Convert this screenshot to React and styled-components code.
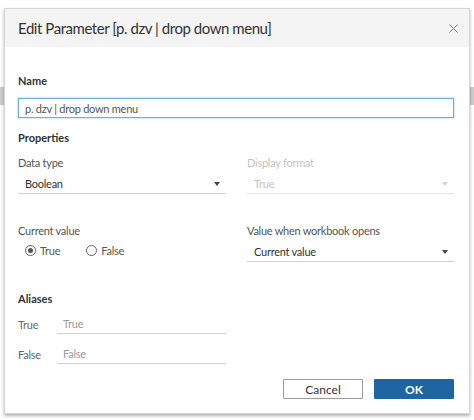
import React from 'react';
import styled, { createGlobalStyle } from 'styled-components';

const GlobalStyle = createGlobalStyle`
  html, body {
    margin: 0;
    background: #fff;
    font-family: Lato, "Open Sans", "Liberation Sans", sans-serif;
  }
`;

const Page = styled.div`
  position: relative;
  width: 474px;
  height: 420px;
  overflow: hidden;
`;

const Backdrop = styled.div`
  margin-top: 87px;
  height: 18px;
  background: #cbcbcb;
`;

const Dialog = styled.div`
  position: absolute;
  left: 4px;
  top: 8px;
  width: 466px;
  height: 406px;
  box-sizing: border-box;
  background: #fff;
  border: 1px solid #d6d6d6;
  box-shadow: 0 2px 3px rgba(0, 0, 0, 0.3);
  display: flex;
  flex-direction: column;
`;

const Header = styled.div`
  height: 38px;
  flex: none;
  background: #f4f4f4;
  display: flex;
  align-items: center;
  justify-content: space-between;
  padding: 0 11px 0 13px;
`;

const Title = styled.div`
  font-size: 15px;
  letter-spacing: -0.45px;
  color: #333;
`;

const Close = styled.button`
  border: 0;
  background: none;
  padding: 0;
  width: 9px;
  height: 9px;
  display: flex;
  color: #777;
`;

const Body = styled.div`
  flex: 1;
  display: flex;
  flex-direction: column;
  padding: 0 15px 15px 13px;
`;

const SectionTitle = styled.div`
  font-size: 11px;
  line-height: 16px;
  font-weight: 700;
  color: #333;
  margin-top: ${(p) => p.$top}px;
`;

const NameInput = styled.div`
  margin-top: 9px;
  height: 20px;
  box-sizing: border-box;
  border: 1px solid #6bb0de;
  box-shadow: 0 0 2px rgba(80, 160, 220, 0.6);
  display: flex;
  align-items: center;
  padding-left: 6px;
  font-size: 11px;
  letter-spacing: -0.25px;
  color: #555;
`;

const Grid = styled.div`
  display: grid;
  grid-template-columns: 208px 207px;
  column-gap: 21px;
  margin-top: ${(p) => p.$top}px;
`;

const Field = styled.div`
  display: flex;
  flex-direction: column;
`;

const Label = styled.div`
  font-size: 11px;
  letter-spacing: -0.25px;
  line-height: 16px;
  color: ${(p) => (p.$disabled ? '#c4c4c4' : '#555')};
`;

const Select = styled.div`
  margin-top: 3px;
  height: 19px;
  border-bottom: 1px solid ${(p) => (p.$disabled ? '#e3e3e3' : '#d0d0d0')};
  display: flex;
  align-items: center;
  justify-content: space-between;
  padding: 0 6px 0 7px;
  font-size: 11px;
  letter-spacing: -0.25px;
  color: ${(p) => (p.$disabled ? '#c4c4c4' : '#333')};
`;

const Caret = styled.span`
  width: 0;
  height: 0;
  border-left: 3.5px solid transparent;
  border-right: 3.5px solid transparent;
  border-top: 4px solid ${(p) => (p.$disabled ? '#d4d4d4' : '#444')};
`;

const RadioRow = styled.div`
  margin-top: 3px;
  height: 16px;
  display: flex;
  align-items: center;
  gap: 26px;
  padding-left: 7px;
`;

const RadioOption = styled.label`
  display: flex;
  align-items: center;
  gap: 4px;
  font-size: 11px;
  letter-spacing: -0.25px;
  color: #555;
`;

const Circle = styled.span`
  width: 11px;
  height: 11px;
  box-sizing: border-box;
  border-radius: 50%;
  border: 1px solid #666;
  display: flex;
  align-items: center;
  justify-content: center;

  &::after {
    content: '';
    width: 5px;
    height: 5px;
    border-radius: 50%;
    background: ${(p) => (p.$checked ? '#555' : 'transparent')};
  }
`;

const AliasRow = styled.div`
  display: flex;
  align-items: flex-end;
  margin-top: ${(p) => p.$top}px;
`;

const AliasLabel = styled.div`
  width: 39px;
  font-size: 11px;
  letter-spacing: -0.25px;
  line-height: 19px;
  color: #666;
`;

const AliasInput = styled.div`
  width: 163px;
  height: 19px;
  border-bottom: 1px solid #d0d0d0;
  display: flex;
  align-items: center;
  padding-left: 6px;
  font-size: 11px;
  letter-spacing: -0.25px;
  color: #9a9a9a;
`;

const Footer = styled.div`
  margin-top: 15px;
  display: flex;
  justify-content: flex-end;
  gap: 11px;
`;

const Button = styled.button`
  width: 80px;
  height: 20px;
  box-sizing: border-box;
  font-family: inherit;
  font-size: 12px;
  border-radius: 1px;
  border: 1px solid ${(p) => (p.$primary ? '#1f65a3' : '#999')};
  background: ${(p) => (p.$primary ? '#1f65a3' : '#fff')};
  color: ${(p) => (p.$primary ? '#fff' : '#333')};
  font-weight: ${(p) => (p.$primary ? 700 : 400)};
  padding: 0;
`;

export default function App() {
  return (
    <Page>
      <GlobalStyle />
      <Backdrop />
      <Dialog>
        <Header>
          <Title>Edit Parameter [p. dzv | drop down menu]</Title>
          <Close>
            <svg width="9" height="9" viewBox="0 0 9 9">
              <path d="M0.5 0.5L8.5 8.5M8.5 0.5L0.5 8.5" stroke="currentColor" strokeWidth="1" />
            </svg>
          </Close>
        </Header>
        <Body>
          <SectionTitle $top={26}>Name</SectionTitle>
          <NameInput>p. dzv | drop down menu</NameInput>
          <SectionTitle $top={12}>Properties</SectionTitle>
          <Grid $top={9}>
            <Field>
              <Label>Data type</Label>
              <Select>
                Boolean
                <Caret />
              </Select>
            </Field>
            <Field>
              <Label $disabled>Display format</Label>
              <Select $disabled>
                True
                <Caret $disabled />
              </Select>
            </Field>
          </Grid>
          <Grid $top={29}>
            <Field>
              <Label>Current value</Label>
              <RadioRow>
                <RadioOption>
                  <Circle $checked />
                  True
                </RadioOption>
                <RadioOption>
                  <Circle />
                  False
                </RadioOption>
              </RadioRow>
            </Field>
            <Field>
              <Label>Value when workbook opens</Label>
              <Select>
                Current value
                <Caret />
              </Select>
            </Field>
          </Grid>
          <SectionTitle $top={29}>Aliases</SectionTitle>
          <AliasRow $top={7}>
            <AliasLabel>True</AliasLabel>
            <AliasInput>True</AliasInput>
          </AliasRow>
          <AliasRow $top={10}>
            <AliasLabel>False</AliasLabel>
            <AliasInput>False</AliasInput>
          </AliasRow>
          <Footer>
            <Button>Cancel</Button>
            <Button $primary>OK</Button>
          </Footer>
        </Body>
      </Dialog>
    </Page>
  );
}
